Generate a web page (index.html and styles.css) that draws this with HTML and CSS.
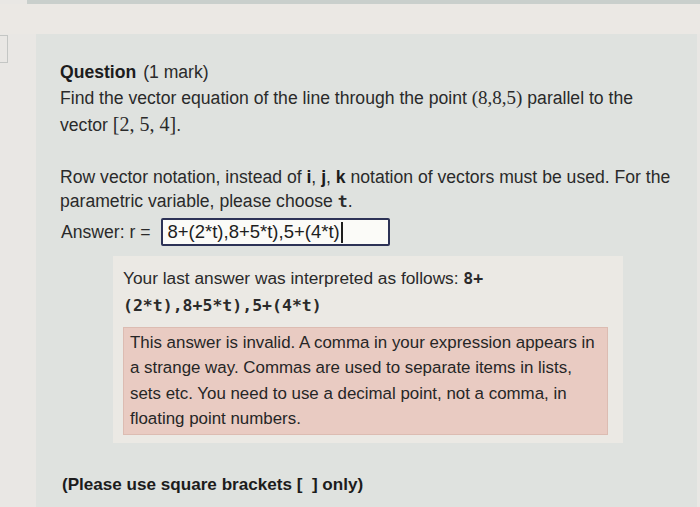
FILE: index.html
```html
<!DOCTYPE html>
<html>
<head>
<meta charset="utf-8">
<link rel="stylesheet" href="styles.css">
</head>
<body>
<div class="topbar"></div>
<div class="band"></div>
<div class="row">
  <div class="side"><div class="tab"></div></div>
  <div class="panel">
    <p class="q"><b>Question</b> <span class="mark">(1 mark)</span><br>
    Find the vector equation of the line through the point <span class="m">(8,8,5)</span> parallel to the<br>
    vector <span class="m big">[2, 5, 4]</span>.</p>
    <p class="q second">Row vector notation, instead of <b>i</b>, <b>j</b>, <b>k</b> notation of vectors must be used. For the<br>
    parametric variable, please choose <code>t</code>.</p>
    <div class="answer">Answer: r = <span class="input">8+(2*t),8+5*t),5+(4*t)<span class="caret"></span></span></div>
    <div class="feedback">
      <p class="interp">Your last answer was interpreted as follows: <code>8+</code><br><code>(2*t),8+5*t),5+(4*t)</code></p>
      <div class="error">This answer is invalid. A comma in your expression appears in a strange way. Commas are used to separate items in lists, sets etc. You need to use a decimal point, not a comma, in floating point numbers.</div>
    </div>
    <p class="please">(Please use square brackets [&nbsp;&nbsp;] only)</p>
  </div>
</div>
</body>
</html>
```
FILE: styles.css
```css
html, body {
  margin: 0;
  padding: 0;
}
body {
  width: 700px;
  height: 507px;
  overflow: hidden;
  background: #e9e7e4;
  font-family: "Liberation Sans", Arial, sans-serif;
  color: #2a2a2a;
}
.topbar {
  height: 4px;
  margin-left: 27px;
  background: #c9cfcc;
}
.band {
  height: 30px;
  background: #ebe8e4;
}
.row {
  display: flex;
  height: 473px;
}
.side {
  width: 36px;
  flex: none;
}
.tab {
  width: 7px;
  height: 26px;
  margin-top: 1px;
  border: 1px solid #c4c6c4;
  border-left: none;
}
.panel {
  flex: 1;
  margin-right: 3px;
  background: #dfe2df;
  padding: 25px 0 0 24px;
  font-size: 17.6px;
}
.q {
  margin: 0;
  line-height: 26px;
}
.q b {
  font-weight: bold;
  color: #1c1c1c;
}
.mark {
  margin-left: 2px;
}
.m {
  font-family: "Liberation Serif", "Times New Roman", serif;
  font-size: 19px;
}
.m.big {
  font-size: 20px;
}
.second {
  margin-top: 27px;
  line-height: 24px;
}
code {
  font-family: "DejaVu Sans Mono", monospace;
  font-weight: bold;
  font-size: 16.5px;
}
.answer {
  display: flex;
  align-items: center;
  height: 28px;
  margin-top: 4px;
  margin-left: 1px;
}
.input {
  display: inline-flex;
  align-items: center;
  box-sizing: border-box;
  width: 229px;
  height: 28px;
  margin-left: 11px;
  padding-left: 4px;
  background: #fbfbf8;
  border: 2px solid #2c3256;
  border-radius: 2px;
  color: #1e1e1e;
  font-size: 18.5px;
}
.caret {
  display: inline-block;
  width: 2px;
  height: 21px;
  margin-left: 1px;
  background: #1e1e1e;
}
.feedback {
  box-sizing: border-box;
  width: 510px;
  height: 187px;
  margin: 10px 0 0 53px;
  padding: 9px 15px 0 10px;
  background: #ebe9e4;
  font-size: 17.3px;
}
.interp {
  margin: 0;
  line-height: 26px;
}
.error {
  margin-top: 8px;
  padding: 2px 2px 3px 6px;
  line-height: 25.3px;
  background: #e9cbc2;
  border: 1px solid #dcbcb2;
  color: #262626;
  font-size: 16.9px;
}
.please {
  margin: 32px 0 0 2px;
  font-weight: bold;
  color: #1c1c1c;
  font-size: 17.1px;
}
```
